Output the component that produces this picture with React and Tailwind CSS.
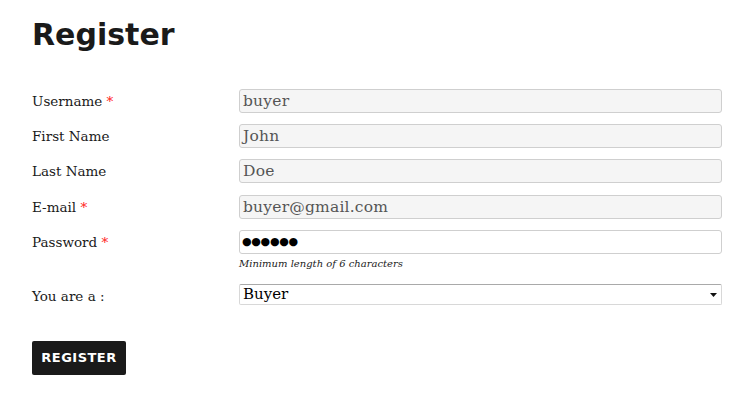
import React from "react";

const serif = "font-['DejaVu_Serif',serif]";

function Field({ label, required, children }) {
  return (
    <div className="flex items-start">
      <div className={`w-[207px] shrink-0 h-6 leading-6 text-[13.5px] text-[#1a1a1a] ${serif}`}>
        {label}
        {required && <span className="text-[#ff1a1a]"> *</span>}
      </div>
      <div className="flex-1">{children}</div>
    </div>
  );
}

function Box({ value, filled = true }) {
  return (
    <div
      className={`h-6 w-full rounded-[3px] border border-[#cfcfcf] px-[3px] leading-[22px] text-[15.5px] tracking-[0.2px] text-[#555] ${serif} ${
        filled ? "bg-[#f5f5f5]" : "bg-white"
      }`}
    >
      {value}
    </div>
  );
}

export default function App() {
  return (
    <div className="w-[750px] h-[396px] bg-white pl-8 pr-[28px] pt-[15px]">
      <h1 className="font-['DejaVu_Sans',sans-serif] text-[30px] font-bold leading-[40px] text-[#1a1a1a]">
        Register
      </h1>
      <div className="mt-[34px] flex flex-col gap-[11px]">
        <Field label="Username" required>
          <Box value="buyer" />
        </Field>
        <Field label="First Name">
          <Box value="John" />
        </Field>
        <Field label="Last Name">
          <Box value="Doe" />
        </Field>
        <div className="mt-px">
          <Field label="E-mail" required>
            <Box value="buyer@gmail.com" />
          </Field>
        </div>
        <Field label="Password" required>
          <div className="h-6 w-full rounded-[3px] border border-[#cfcfcf] bg-white px-[2px] leading-[22px] text-[11px] tracking-[-0.3px] text-black font-['DejaVu_Sans',sans-serif]">
            ●●●●●●
          </div>
          <div className={`mt-[3px] text-[10px] italic leading-[14px] text-[#222] ${serif}`}>
            Minimum length of 6 characters
          </div>
        </Field>
        <div className="mt-[2px]">
          <Field label="You are a :">
            <div className="flex h-[21px] w-full items-center justify-between rounded-[2px] border border-[#d8d8d8] border-t-[#a9a9a9] bg-white pl-[3px] pr-[4px]">
              <span className={`text-[15px] leading-[19px] text-black ${serif}`}>Buyer</span>
              <svg width="7" height="4" viewBox="0 0 7 4">
                <path d="M0 0 H7 L3.5 4 Z" fill="#111" />
              </svg>
            </div>
          </Field>
        </div>
      </div>
      <button className="mt-[33px] h-[34px] w-[94px] rounded-[2px] bg-[#1a1a1a] text-[13px] font-bold tracking-[0.5px] text-white font-['DejaVu_Sans',sans-serif]">
        REGISTER
      </button>
    </div>
  );
}
